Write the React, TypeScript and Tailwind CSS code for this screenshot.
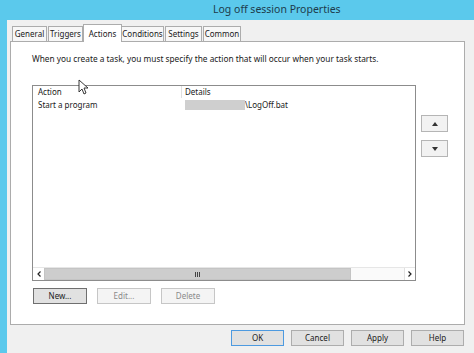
import React from "react";

const font = { fontFamily: '"Noto Sans", "Liberation Sans", sans-serif' };

const tabs = [
  { label: "General", w: "w-[35px]" },
  { label: "Triggers", w: "w-[35px]" },
  { label: "Actions", w: "w-[39px]" },
  { label: "Conditions", w: "w-[43px]" },
  { label: "Settings", w: "w-[37px]" },
  { label: "Common", w: "w-[38px]" },
];

const Btn = ({
  label,
  kind = "normal",
  className = "",
}: {
  label: string;
  kind?: "normal" | "default" | "focus" | "disabled";
  className?: string;
}) => {
  const styles = {
    normal: "border-[#adadad] bg-[#e1e1e1] text-[#1a1a1a]",
    default: "border-[#4d9ae0] bg-[#e1e1e1] text-[#1a1a1a]",
    focus: "border-[#6f6f6f] bg-[#e1e1e1] text-[#1a1a1a]",
    disabled: "border-[#c6c6c6] bg-[#f4f4f4] text-[#8a8a8a]",
  };
  return (
    <div
      className={`flex items-center justify-center border text-[8px] leading-none ${styles[kind]} ${className}`}
    >
      {label}
    </div>
  );
};

const Cursor = () => (
  <svg width="10" height="16" viewBox="0 0 10 16" className="absolute left-[78px] top-[79px]">
    <path d="M1 1 L1 13 L4 10 L6 15 L8 14 L6 9 L10 9 Z" fill="#fff" stroke="#222" strokeWidth="0.9" strokeLinejoin="round" />
  </svg>
);

export default function App() {
  return (
    <div className="relative w-[474px] h-[353px] overflow-hidden flex flex-col bg-[#5bc9ec]" style={font}>
      {/* title bar */}
      <div className="h-[20px] shrink-0 pl-[213px] flex items-center text-[10.5px] text-[#1d3b4b]">
        Log off session Properties
      </div>

      <div className="flex flex-1">
        <div className="w-[7px] shrink-0" />
        <div className="flex-1 bg-[#f0f0f0] pl-[3px] pt-[5px] flex flex-col">
          {/* tabs */}
          <div className="flex items-end h-[16px] pl-[2px]">
            {tabs.map((t) =>
              t.label === "Actions" ? (
                <div
                  key={t.label}
                  className={`relative z-10 h-[18px] -mb-[1px] -ml-[1px] -mr-[1px] ${t.w} flex items-center justify-center bg-white border border-b-0 border-[#acacac] text-[8px] text-[#1a1a1a]`}
                >
                  {t.label}
                </div>
              ) : (
                <div
                  key={t.label}
                  className={`h-[15px] ${t.w} mr-[1px] flex items-center justify-center bg-[#f7f7f7] border border-b-0 border-[#acacac] text-[8px] text-[#1a1a1a]`}
                >
                  {t.label}
                </div>
              )
            )}
          </div>

          {/* panel */}
          <div className="w-[455px] h-[284px] bg-white border border-[#acacac] pl-[21px] pt-[12px] flex flex-col">
            <div className="text-[8.3px] text-[#1a1a1a] leading-[10px]">
              When you create a task, you must specify the action that will occur when your task starts.
            </div>

            <div className="flex mt-[21px]">
              {/* list */}
              <div className="w-[384px] h-[196px] border border-[#8c8c8c] flex flex-col">
                <div className="flex h-[12px] text-[8px] text-[#1a1a1a]">
                  <div className="w-[149px] pl-[5px] flex items-center border-r border-[#e0e0e0]">Action</div>
                  <div className="pl-[3px] flex items-center">Details</div>
                </div>
                <div className="flex h-[12px] text-[8px] text-[#1a1a1a] mt-[1px]">
                  <div className="w-[149px] pl-[5px] flex items-center">Start a program</div>
                  <div className="pl-[3px] flex items-center">
                    <div className="w-[60px] h-[10px] bg-[#cfcfcf] blur-[0.6px]" />
                    <span>\LogOff.bat</span>
                  </div>
                </div>
                <div className="flex-1" />
                {/* scrollbar */}
                <div className="h-[13px] flex border-t border-[#e6e6e6] bg-[#f0f0f0]">
                  <div className="w-[11px] flex items-center justify-center bg-white">
                    <svg width="4" height="6" viewBox="0 0 4 6"><path d="M3.5 0.5 L1 3 L3.5 5.5" fill="none" stroke="#222" strokeWidth="1.2" /></svg>
                  </div>
                  <div className="w-[307px] bg-[#cdcdcd] border border-[#c4c4c4] flex items-center justify-center">
                    <svg width="6" height="5" viewBox="0 0 6 5">
                      <path d="M0.5 0 V5 M2.5 0 V5 M4.5 0 V5" stroke="#444" strokeWidth="1" />
                    </svg>
                  </div>
                  <div className="flex-1 bg-[#fafafa]" />
                  <div className="w-[11px] flex items-center justify-center bg-white border-l border-[#e0e0e0]">
                    <svg width="4" height="6" viewBox="0 0 4 6"><path d="M0.5 0.5 L3 3 L0.5 5.5" fill="none" stroke="#222" strokeWidth="1.2" /></svg>
                  </div>
                </div>
              </div>

              {/* up / down */}
              <div className="flex flex-col pl-[5px] pt-[30px] gap-[8px]">
                <div className="w-[27px] h-[17px] border border-[#b5b5b5] bg-[#f2f2f2] flex items-center justify-center">
                  <svg width="6" height="4" viewBox="0 0 6 4"><path d="M0 4 L3 0 L6 4 Z" fill="#333" /></svg>
                </div>
                <div className="w-[27px] h-[17px] border border-[#b5b5b5] bg-[#f2f2f2] flex items-center justify-center">
                  <svg width="6" height="4" viewBox="0 0 6 4"><path d="M0 0 L3 4 L6 0 Z" fill="#333" /></svg>
                </div>
              </div>
            </div>

            <div className="flex gap-[10px] mt-[7px] pl-[1px]">
              <Btn label="New..." kind="focus" className="w-[54px] h-[16px]" />
              <Btn label="Edit..." kind="disabled" className="w-[54px] h-[16px]" />
              <Btn label="Delete" kind="disabled" className="w-[54px] h-[16px]" />
            </div>
          </div>

          {/* bottom buttons */}
          <div className="flex gap-[7px] pl-[221px] mt-[5px]">
            <Btn label="OK" kind="default" className="w-[53px] h-[16px]" />
            <Btn label="Cancel" className="w-[53px] h-[16px]" />
            <Btn label="Apply" className="w-[53px] h-[16px]" />
            <Btn label="Help" className="w-[53px] h-[16px]" />
          </div>
        </div>
      </div>
      <Cursor />
    </div>
  );
}
